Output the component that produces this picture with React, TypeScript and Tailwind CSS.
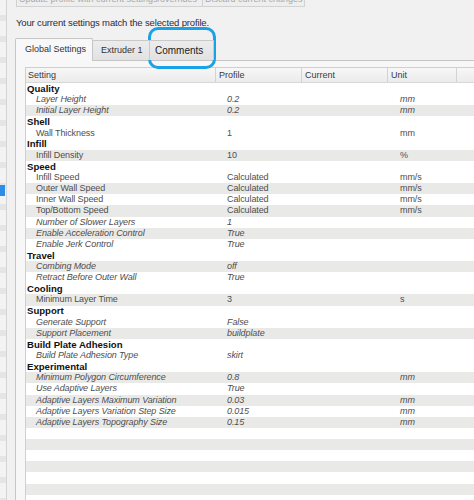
import React from "react";

type Child = {
  name: string;
  profile: string;
  unit: string;
  italic: boolean;
  gray: boolean;
};
type Cat = { title: string; items: Child[] };

const c = (name: string, profile: string, unit: string, italic: boolean, gray: boolean): Child => ({
  name,
  profile,
  unit,
  italic,
  gray,
});

const DATA: Cat[] = [
  {
    title: "Quality",
    items: [c("Layer Height", "0.2", "mm", true, false), c("Initial Layer Height", "0.2", "mm", true, true)],
  },
  { title: "Shell", items: [c("Wall Thickness", "1", "mm", false, false)] },
  { title: "Infill", items: [c("Infill Density", "10", "%", false, true)] },
  {
    title: "Speed",
    items: [
      c("Infill Speed", "Calculated", "mm/s", false, false),
      c("Outer Wall Speed", "Calculated", "mm/s", false, true),
      c("Inner Wall Speed", "Calculated", "mm/s", false, false),
      c("Top/Bottom Speed", "Calculated", "mm/s", false, true),
      c("Number of Slower Layers", "1", "", true, false),
      c("Enable Acceleration Control", "True", "", true, true),
      c("Enable Jerk Control", "True", "", true, false),
    ],
  },
  {
    title: "Travel",
    items: [c("Combing Mode", "off", "", true, true), c("Retract Before Outer Wall", "True", "", true, false)],
  },
  { title: "Cooling", items: [c("Minimum Layer Time", "3", "s", false, true)] },
  {
    title: "Support",
    items: [c("Generate Support", "False", "", true, false), c("Support Placement", "buildplate", "", true, true)],
  },
  { title: "Build Plate Adhesion", items: [c("Build Plate Adhesion Type", "skirt", "", true, false)] },
  {
    title: "Experimental",
    items: [
      c("Minimum Polygon Circumference", "0.8", "mm", true, true),
      c("Use Adaptive Layers", "True", "", true, false),
      c("Adaptive Layers Maximum Variation", "0.03", "mm", true, true),
      c("Adaptive Layers Variation Step Size", "0.015", "mm", true, false),
      c("Adaptive Layers Topography Size", "0.15", "mm", true, true),
    ],
  },
];

function CategoryRow({ title }: { title: string }) {
  return (
    <div className="h-[11.13px] flex items-center bg-white shrink-0">
      <div className="pl-[1px] text-[9.6px] font-bold text-[#111] leading-none whitespace-nowrap">{title}</div>
    </div>
  );
}

function ChildRow({ item }: { item: Child }) {
  const it = item.italic ? "italic" : "";
  return (
    <div
      className={`h-[11.13px] flex items-center shrink-0 text-[9px] tracking-[-0.1px] leading-none text-[#4e4e4e] ${
        item.gray ? "bg-[#e9e9e7]" : "bg-white"
      }`}
    >
      <div className={`w-[190px] pl-[10px] whitespace-nowrap ${it}`}>{item.name}</div>
      <div className={`w-[86px] pl-[11px] whitespace-nowrap ${it}`}>{item.profile}</div>
      <div className="w-[86px]" />
      <div className={`w-[69px] pl-[12px] whitespace-nowrap ${it}`}>{item.unit}</div>
      <div className="flex-1" />
    </div>
  );
}

function HeaderCell({ label, w, pl }: { label: string; w: string; pl: string }) {
  return (
    <div className={`${w} ${pl} h-full flex items-center border-r border-[#d3d3d3] whitespace-nowrap`}>{label}</div>
  );
}

export default function App() {
  const empties = [false, true, false, true, false, true, false, true];
  return (
    <div className="relative w-[474px] h-[500px] overflow-hidden bg-[#f1f1f1] flex font-['Liberation_Sans',Arial,sans-serif]">
      {/* cut-off list on the left */}
      <div className="w-[7px] h-full border-r border-[#d4d4d4] bg-[repeating-linear-gradient(to_bottom,#f3f3f3_0px,#f3f3f3_15px,#e5e5e5_15px,#e5e5e5_21px)] flex flex-col">
        <div className="mt-[185px] h-[11px] w-[5px] bg-[#2e8ee6]" />
      </div>

      <div className="flex-1 flex flex-col pl-[8px] min-w-0">
        {/* partially visible button bar */}
        <div className="h-[7px] overflow-hidden pl-[1px] shrink-0">
          <div className="-mt-[8px] h-[15px] w-[289px] border border-[#d2d2d2] bg-[#eeeeee] flex items-center text-[9px] text-[#a9a9a9] whitespace-nowrap leading-none">
            <span className="pl-[2px] w-[185px]">Update profile with current settings/overrides</span>
            <span className="h-full border-l border-[#cfcfcf]" />
            <span className="pl-[2px]">Discard current changes</span>
          </div>
        </div>

        {/* message */}
        <div className="mt-[10px] pl-[1px] text-[9.5px] tracking-[-0.15px] leading-[12px] text-[#2f2a3a] whitespace-nowrap shrink-0">
          Your current settings match the selected profile.
        </div>

        {/* tabs */}
        <div className="mt-[8px] flex items-end h-[23px] shrink-0 relative z-10">
          <div className="w-[78px] h-[23px] -mb-px border border-b-0 border-[#c6c6c6] bg-[#f8f8f8] rounded-t-[2px] flex items-center pl-[9px] text-[9px] text-[#333] whitespace-nowrap">
            Global Settings
          </div>
          <div className="w-[57px] h-[20px] border-t border-r border-[#c9c9c9] bg-[linear-gradient(to_bottom,#ececec,#e2e2e2)] flex items-center pl-[8px] text-[9px] text-[#333] whitespace-nowrap">
            Extruder 1
          </div>
          <div className="w-[64px] h-[20px] border-t border-r border-[#c9c9c9] bg-[linear-gradient(to_bottom,#ececec,#e2e2e2)] flex items-center pl-[5px] text-[10px] text-[#1a1a1a] whitespace-nowrap">
            Comments
          </div>
        </div>

        {/* pane */}
        <div className="flex-1 min-h-0 flex flex-col border-t border-l border-[#c6c6c6] bg-[#f7f7f7] pl-[9px] pt-[6px]">
          <div className="flex-1 min-h-0 flex flex-col border-l border-t border-[#cfcfcf] bg-white overflow-hidden">
            <div className="h-[15px] shrink-0 flex bg-[linear-gradient(to_bottom,#f7f7f7,#ebebeb)] border-b border-[#d8d8d8] text-[9px] text-[#3a3a3a] leading-none">
              <HeaderCell label="Setting" w="w-[190px]" pl="pl-[2px]" />
              <HeaderCell label="Profile" w="w-[86px]" pl="pl-[3px]" />
              <HeaderCell label="Current" w="w-[86px]" pl="pl-[3px]" />
              <HeaderCell label="Unit" w="w-[69px]" pl="pl-[3px]" />
              <div className="flex-1" />
            </div>
            {DATA.map((cat) => (
              <React.Fragment key={cat.title}>
                <CategoryRow title={cat.title} />
                {cat.items.map((item) => (
                  <ChildRow key={item.name} item={item} />
                ))}
              </React.Fragment>
            ))}
            {empties.map((g, i) => (
              <div key={i} className={`h-[11.13px] shrink-0 ${g ? "bg-[#e9e9e7]" : "bg-white"}`} />
            ))}
          </div>
        </div>
      </div>

      {/* annotation highlight */}
      <div className="absolute left-[148px] top-[27px] w-[68px] h-[42px] border-[3px] border-[#1ba2e6] rounded-[10px]" />
    </div>
  );
}
